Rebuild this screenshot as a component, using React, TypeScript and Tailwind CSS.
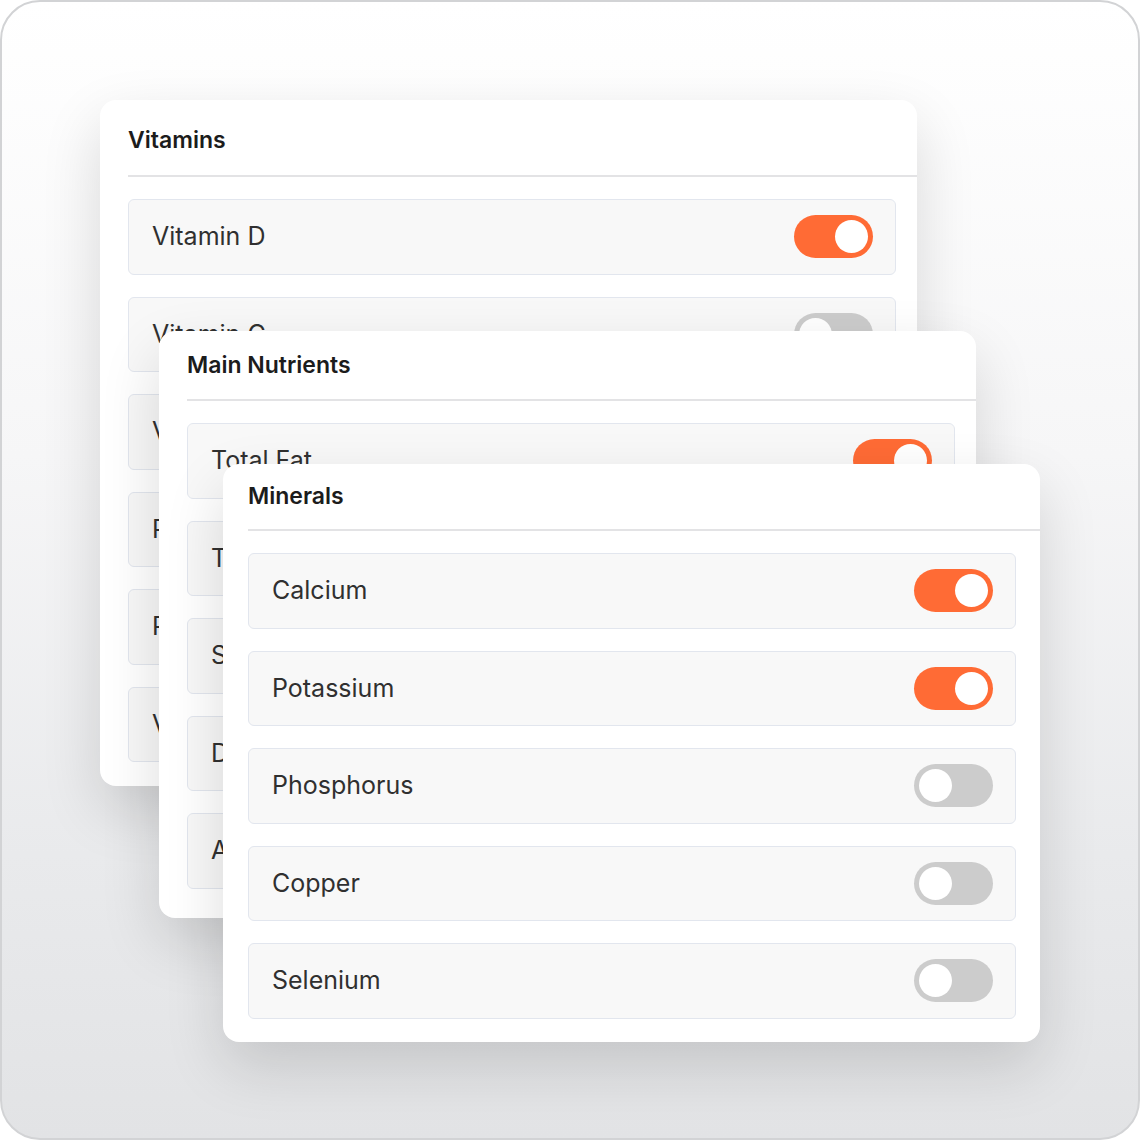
import React from "react";

type Item = { name: string; on: boolean };

function Toggle({ on }: { on: boolean }) {
  return (
    <div
      className={
        "flex h-[43px] w-[79px] shrink-0 items-center rounded-full px-[5px] " +
        (on ? "justify-end bg-[#ff6b35]" : "justify-start bg-[#cccccc]")
      }
    >
      <div className="h-[33px] w-[33px] rounded-full bg-white" />
    </div>
  );
}

function Card({
  title,
  items,
  className,
  headerClass,
  bottomClass,
}: {
  title: string;
  items: Item[];
  className: string;
  headerClass: string;
  bottomClass: string;
}) {
  return (
    <div
      className={
        "absolute w-[817px] overflow-hidden rounded-[16px] bg-white shadow-[0_24px_60px_rgba(0,0,0,0.14)] " +
        className
      }
    >
      <div className={"flex items-center border-b-2 border-[#e3e3e5] text-[23px] font-semibold text-[#1c1c1c] " + headerClass}>
        {title}
      </div>
      <div className={"flex flex-col gap-[22px] pt-[22px] " + bottomClass}>
        {items.map((it) => (
          <div
            key={it.name}
            className="flex h-[75.5px] w-[768px] items-center justify-between rounded-[6px] border-[1.5px] border-[#e2e6ee] bg-[#f8f8f8] pl-[23px] pr-[22px]"
          >
            <span className="text-[25px] text-[#303030]">{it.name}</span>
            <Toggle on={it.on} />
          </div>
        ))}
      </div>
    </div>
  );
}

export default function App() {
  return (
    <div
      className="relative h-[1140px] w-[1140px] overflow-hidden rounded-[40px] border-2 border-[#d2d3d5] bg-[linear-gradient(180deg,#ffffff_0%,#f6f6f7_40%,#e9eaec_75%,#e2e3e5_100%)]"
      style={{ fontFamily: "Inter, 'Noto Sans', sans-serif" }}
    >
      <Card
        title="Vitamins"
        className="left-[98px] top-[98px] pl-[28px]"
        headerClass="h-[77px] pt-[6px]"
        bottomClass="pb-[24px]"
        items={[
          { name: "Vitamin D", on: true },
          { name: "Vitamin C", on: false },
          { name: "Vitamin B12", on: false },
          { name: "Pantothenic Acid", on: false },
          { name: "Pyridoxine", on: false },
          { name: "Vitamin E", on: false },
        ]}
      />
      <Card
        title="Main Nutrients"
        className="left-[157px] top-[329px] pl-[28px]"
        headerClass="h-[70px]"
        bottomClass="pb-[29px]"
        items={[
          { name: "Total Fat", on: true },
          { name: "Trans Fat", on: false },
          { name: "Saturated Fat", on: false },
          { name: "Dietary Fiber", on: false },
          { name: "Added Sugars", on: false },
        ]}
      />
      <Card
        title="Minerals"
        className="left-[221px] top-[462px] pl-[25px]"
        headerClass="h-[67px]"
        bottomClass="pb-[23px]"
        items={[
          { name: "Calcium", on: true },
          { name: "Potassium", on: true },
          { name: "Phosphorus", on: false },
          { name: "Copper", on: false },
          { name: "Selenium", on: false },
        ]}
      />
    </div>
  );
}
